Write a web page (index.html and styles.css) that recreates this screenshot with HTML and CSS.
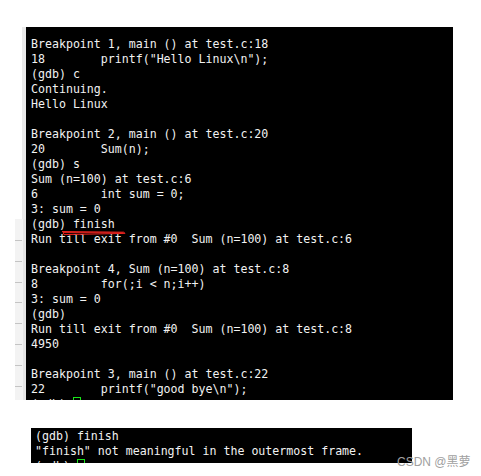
FILE: index.html
```html
<!DOCTYPE html>
<html>
<head>
<meta charset="utf-8">
<link rel="stylesheet" href="styles.css">
</head>
<body>
<div class="page">
  <div class="shot">
    <div class="gutter">
      <div class="gutter-top"></div>
      <div class="gutter-ruler">
        <span class="tick"></span><span class="tick"></span><span class="tick"></span><span class="tick"></span>
        <span class="tick"></span><span class="tick"></span><span class="tick"></span><span class="tick"></span>
      </div>
    </div>
    <div class="term term-main">
<pre class="out">Breakpoint 1, main () at test.c:18
18        printf("Hello Linux\n");
(gdb) c
Continuing.
Hello Linux

Breakpoint 2, main () at test.c:20
20        Sum(n);
(gdb) s
Sum (n=100) at test.c:6
6         int sum = 0;
3: sum = 0
(gdb) finish
Run till exit from #0  Sum (n=100) at test.c:6

Breakpoint 4, Sum (n=100) at test.c:8
8         for(;i &lt; n;i++)
3: sum = 0
(gdb)
Run till exit from #0  Sum (n=100) at test.c:8
4950

Breakpoint 3, main () at test.c:22
22        printf("good bye\n");
(gdb) <span class="cursor"></span></pre>
      <svg class="mark" width="66" height="8" viewBox="0 0 66 8">
        <path d="M1 2.5 L63 3.2 L64 4.4 L3 5.6 L2 3.6 L62 3.8" fill="none" stroke="#e8231f" stroke-width="1"/>
      </svg>
    </div>
  </div>
  <div class="term term-small">
<pre class="out">(gdb) finish
"finish" not meaningful in the outermost frame.
(gdb) <span class="cursor"></span></pre>
  </div>
  <div class="watermark">CSDN @黑萝</div>
</div>
</body>
</html>
```

FILE: styles.css
```css
html, body {
  margin: 0;
  padding: 0;
  background: #ffffff;
}

.page {
  position: relative;
  width: 481px;
  height: 476px;
  padding-top: 27px;
  box-sizing: border-box;
  overflow: hidden;
}

.shot {
  display: flex;
  margin-left: 15px;
  height: 373px;
}

.gutter {
  width: 11px;
  display: flex;
  flex-direction: column;
}

.gutter-top {
  height: 192px;
  width: 4px;
  margin-left: 7px;
  background: #e9e9e9;
}

.gutter-ruler {
  flex: 1;
  background: #f3f3f3;
  border-right: 3px solid #e6e6e6;
  display: flex;
  flex-direction: column;
  gap: 19.8px;
  padding-top: 21px;
}

.tick {
  display: block;
  width: 7px;
  height: 1px;
  background: #c4c4c4;
}

.term {
  background: #000000;
  overflow: hidden;
  box-sizing: border-box;
}

.term-main {
  position: relative;
  width: 427px;
  height: 373px;
  padding: 10px 0 0 5px;
}

.term-small {
  width: 381px;
  height: 35px;
  margin: 28px 0 0 31px;
  padding: 1px 0 0 4px;
}

.out {
  margin: 0;
  font-family: "DejaVu Sans Mono", monospace;
  font-size: 11.6px;
  line-height: 15px;
  color: #f2f2f2;
  white-space: pre;
}

.cursor {
  display: inline-block;
  width: 6px;
  height: 12px;
  border: 1px solid #19e619;
  vertical-align: top;
  margin-top: 0;
}

.mark {
  position: absolute;
  left: 35px;
  top: 202px;
}

.watermark {
  position: absolute;
  left: 397px;
  top: 452px;
  font-family: "Liberation Sans", "Noto Sans CJK SC", sans-serif;
  font-size: 12px;
  color: #a0a0a0;
  white-space: nowrap;
}
```
